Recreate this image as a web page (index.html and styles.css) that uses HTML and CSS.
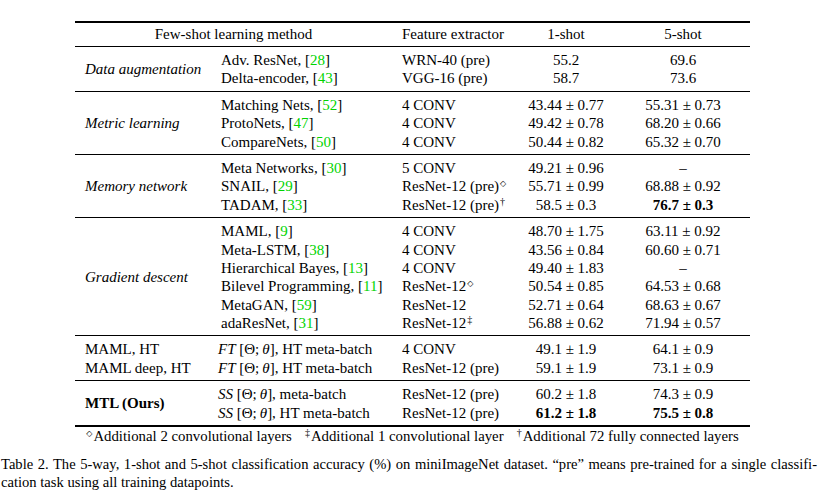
FILE: index.html
```html
<!DOCTYPE html>
<html>
<head>
<meta charset="utf-8">
<link rel="stylesheet" href="styles.css">
</head>
<body>
<div class="tbl">
  <div class="sec head">
    <div class="span2">Few-shot learning method</div>
    <div class="f">Feature extractor</div>
    <div class="n">1-shot</div>
    <div class="n">5-shot</div>
  </div>

  <div class="sec">
    <div class="cat r2">Data augmentation</div>
    <div class="m">Adv. ResNet, [<span class="c">28</span>]</div>
    <div class="f">WRN-40 (pre)</div>
    <div class="n">55.2</div>
    <div class="n">69.6</div>
    <div class="m">Delta-encoder, [<span class="c">43</span>]</div>
    <div class="f">VGG-16 (pre)</div>
    <div class="n">58.7</div>
    <div class="n">73.6</div>
  </div>

  <div class="sec">
    <div class="cat r3">Metric learning</div>
    <div class="m">Matching Nets, [<span class="c">52</span>]</div>
    <div class="f">4 CONV</div>
    <div class="n">43.44 ± 0.77</div>
    <div class="n">55.31 ± 0.73</div>
    <div class="m">ProtoNets, [<span class="c">47</span>]</div>
    <div class="f">4 CONV</div>
    <div class="n">49.42 ± 0.78</div>
    <div class="n">68.20 ± 0.66</div>
    <div class="m">CompareNets, [<span class="c">50</span>]</div>
    <div class="f">4 CONV</div>
    <div class="n">50.44 ± 0.82</div>
    <div class="n">65.32 ± 0.70</div>
  </div>

  <div class="sec">
    <div class="cat r3">Memory network</div>
    <div class="m">Meta Networks, [<span class="c">30</span>]</div>
    <div class="f">5 CONV</div>
    <div class="n">49.21 ± 0.96</div>
    <div class="n">–</div>
    <div class="m">SNAIL, [<span class="c">29</span>]</div>
    <div class="f">ResNet-12 (pre)<sup class="dia">◇</sup></div>
    <div class="n">55.71 ± 0.99</div>
    <div class="n">68.88 ± 0.92</div>
    <div class="m">TADAM, [<span class="c">33</span>]</div>
    <div class="f">ResNet-12 (pre)<sup>†</sup></div>
    <div class="n">58.5 ± 0.3</div>
    <div class="n"><b>76.7 ± 0.3</b></div>
  </div>

  <div class="sec">
    <div class="cat r6">Gradient descent</div>
    <div class="m">MAML, [<span class="c">9</span>]</div>
    <div class="f">4 CONV</div>
    <div class="n">48.70 ± 1.75</div>
    <div class="n">63.11 ± 0.92</div>
    <div class="m">Meta-LSTM, [<span class="c">38</span>]</div>
    <div class="f">4 CONV</div>
    <div class="n">43.56 ± 0.84</div>
    <div class="n">60.60 ± 0.71</div>
    <div class="m">Hierarchical Bayes, [<span class="c">13</span>]</div>
    <div class="f">4 CONV</div>
    <div class="n">49.40 ± 1.83</div>
    <div class="n">–</div>
    <div class="m">Bilevel Programming, [<span class="c">11</span>]</div>
    <div class="f">ResNet-12<sup class="dia">◇</sup></div>
    <div class="n">50.54 ± 0.85</div>
    <div class="n">64.53 ± 0.68</div>
    <div class="m">MetaGAN, [<span class="c">59</span>]</div>
    <div class="f">ResNet-12</div>
    <div class="n">52.71 ± 0.64</div>
    <div class="n">68.63 ± 0.67</div>
    <div class="m">adaResNet, [<span class="c">31</span>]</div>
    <div class="f">ResNet-12<sup>‡</sup></div>
    <div class="n">56.88 ± 0.62</div>
    <div class="n">71.94 ± 0.57</div>
  </div>

  <div class="sec">
    <div class="plain">MAML, HT</div>
    <div class="m mm"><i>FT</i> [Θ;&thinsp;<i>θ</i>], HT meta-batch</div>
    <div class="f">4 CONV</div>
    <div class="n">49.1 ± 1.9</div>
    <div class="n">64.1 ± 0.9</div>
    <div class="plain">MAML deep, HT</div>
    <div class="m mm"><i>FT</i> [Θ;&thinsp;<i>θ</i>], HT meta-batch</div>
    <div class="f">ResNet-12 (pre)</div>
    <div class="n">59.1 ± 1.9</div>
    <div class="n">73.1 ± 0.9</div>
  </div>

  <div class="sec last">
    <div class="plain r2 bold">MTL (Ours)</div>
    <div class="m mm"><i>SS</i> [Θ;&thinsp;<i>θ</i>], meta-batch</div>
    <div class="f">ResNet-12 (pre)</div>
    <div class="n">60.2 ± 1.8</div>
    <div class="n">74.3 ± 0.9</div>
    <div class="m mm"><i>SS</i> [Θ;&thinsp;<i>θ</i>], HT meta-batch</div>
    <div class="f">ResNet-12 (pre)</div>
    <div class="n"><b>61.2 ± 1.8</b></div>
    <div class="n"><b>75.5 ± 0.8</b></div>
  </div>

  <div class="notes"><span><sup class="dia">◇</sup>Additional 2 convolutional layers</span><span><sup>‡</sup>Additional 1 convolutional layer</span><span><sup>†</sup>Additional 72 fully connected layers</span></div>
</div>

<p class="caption"><span class="l1">Table 2. The 5-way, 1-shot and 5-shot classification accuracy (%) on miniImageNet dataset. “pre” means pre-trained for a single classifi-</span><span class="l2">cation task using all training datapoints.</span></p>
</body>
</html>
```

FILE: styles.css
```css
html, body {
  margin: 0;
  padding: 0;
  background: #ffffff;
}

body {
  font-family: "Liberation Serif", "Times New Roman", serif;
  font-size: 15px;
  color: #000000;
}

.tbl {
  width: 675px;
  margin: 21px 0 0 75px;
  border-top: 2px solid #000;
}

.sec {
  display: grid;
  grid-template-columns: 136px 181px 120px 108px 130px;
  grid-auto-rows: 18.4px;
  line-height: 18.4px;
  padding: 4px 0 3px;
  border-top: 1px solid #000;
  white-space: nowrap;
}

.sec.head {
  border-top: none;
  padding: 2px 0 2.6px;
}

.sec.last {
  border-bottom: 2px solid #000;
}

.span2 {
  grid-column: 1 / span 2;
  text-align: center;
}

.cat {
  grid-column: 1;
  font-style: italic;
  padding-left: 10px;
  align-self: center;
}

.plain {
  grid-column: 1;
  padding-left: 10px;
}

.r2 { grid-row: 1 / span 2; align-self: center; }
.r3 { grid-row: 1 / span 3; }
.r6 { grid-row: 1 / span 6; }

.bold { font-weight: bold; }

.m {
  padding-left: 10px;
}

.m.mm {
  padding-left: 7px;
}

.f {
  padding-left: 10px;
}

.n {
  text-align: center;
}

.sec .n + .n {
  padding-right: 4px;
}

.c {
  color: #00d400;
}

sup {
  font-size: 10px;
  line-height: 0;
  vertical-align: 5px;
  margin-left: 1px;
}

sup.dia {
  font-size: 8px;
  font-family: "DejaVu Sans", sans-serif;
}

.notes {
  text-align: center;
  line-height: 18.4px;
  white-space: nowrap;
  font-size: 14.8px;
}

.notes span + span {
  margin-left: 13px;
}

.notes sup {
  margin-left: 0;
  margin-right: 1px;
}

.caption {
  margin: 9.4px 0 0 1px;
  width: 816px;
  line-height: 18px;
  font-size: 14.6px;
}

.caption .l1 {
  display: block;
  text-align: justify;
  text-align-last: justify;
  white-space: nowrap;
}

.caption .l2 {
  display: block;
}
```
